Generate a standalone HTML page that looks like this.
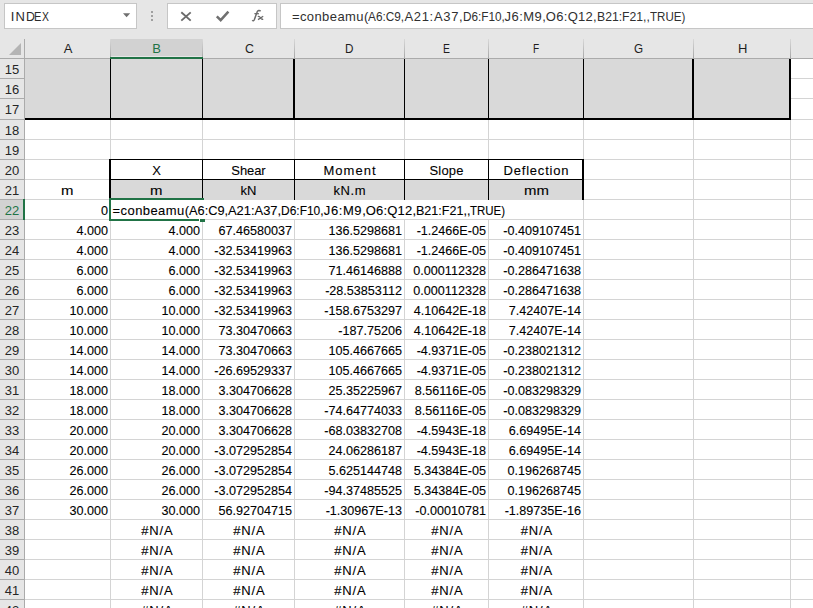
<!DOCTYPE html>
<html><head><meta charset="utf-8"><style>
html,body{margin:0;padding:0;}
body{width:813px;height:608px;overflow:hidden;position:relative;background:#fff;font-family:"Liberation Sans",sans-serif;}
body>div{position:absolute;}
.t{white-space:pre;}
.b{-webkit-text-stroke:0.1px currentColor;}
</style></head><body>
<div style="left:0px;top:0px;width:813px;height:39px;background:#e6e6e6;"></div>
<div style="left:4px;top:3px;width:133px;height:26px;background:#fff;box-sizing:border-box;border:1px solid #c6c6c6;"></div>
<div class="t" style="left:10.70px;top:10.00px;font-size:13px;line-height:13px;color:#2a2a2a;">I</div>
<div class="t" style="left:15.50px;top:10.00px;font-size:13px;line-height:13px;color:#2a2a2a;">N</div>
<div class="t" style="left:25.80px;top:10.00px;font-size:13px;line-height:13px;color:#2a2a2a;transform:scaleX(0.95);transform-origin:0 0;">D</div>
<div class="t" style="left:34.40px;top:10.00px;font-size:13px;line-height:13px;color:#2a2a2a;transform:scaleX(0.85);transform-origin:0 0;">E</div>
<div class="t" style="left:41.80px;top:10.00px;font-size:13px;line-height:13px;color:#2a2a2a;transform:scaleX(0.8);transform-origin:0 0;">X</div>
<svg style="position:absolute;left:122px;top:12px" width="10" height="7"><polygon points="1,1.2 8.2,1.2 4.6,5.2" fill="#6f6f6f"/></svg>
<div style="left:151px;top:11px;width:2px;height:2px;background:#a0a0a0;"></div>
<div style="left:151px;top:15px;width:2px;height:2px;background:#a0a0a0;"></div>
<div style="left:151px;top:19px;width:2px;height:2px;background:#a0a0a0;"></div>
<div style="left:167px;top:3px;width:110px;height:26px;background:#fff;box-sizing:border-box;border:1px solid #c6c6c6;"></div>
<svg style="position:absolute;left:0;top:0" width="300" height="39"><path d="M181.3 12.2 L190.7 20.6 M190.7 12.4 L181.3 20.6" stroke="#6b6b6b" stroke-width="1.9" fill="none"/><path d="M216.8 16.3 L220.7 20.2 L228.4 11.6" stroke="#707070" stroke-width="2.5" fill="none"/><path d="M260.6 11.2 C259.6 9.9 257.6 10.2 257 12.2 L254.4 19.6 C254 20.9 253 21.1 252.2 20.2" stroke="#6b6b6b" stroke-width="1.5" fill="none"/><path d="M254.4 13.7 L258.9 13.7" stroke="#6b6b6b" stroke-width="1.3" fill="none"/><path d="M257.8 16.6 C259 16 259.8 16.6 260.6 18 C261.3 19.3 262 19.6 263.2 19.1 M263.2 16.3 L258 19.6" stroke="#6b6b6b" stroke-width="1.3" fill="none"/></svg>
<div style="left:280px;top:3px;width:535px;height:26px;background:#fff;box-sizing:border-box;border:1px solid #c6c6c6;"></div>
<div class="t" style="left:291.90px;top:10.00px;font-size:13px;line-height:13px;color:#303030;letter-spacing:0.419px;">=conbeamu(</div>
<div class="t" style="left:368.30px;top:10.00px;font-size:13px;line-height:13px;color:#303030;transform:scaleX(0.9083399874427034);transform-origin:0 0;">A6:C9,</div>
<div class="t" style="left:404.40px;top:10.00px;font-size:13px;line-height:13px;color:#303030;letter-spacing:0.688px;">A21:A37,</div>
<div class="t" style="left:462.70px;top:10.00px;font-size:13px;line-height:13px;color:#303030;transform:scaleX(0.903923953072453);transform-origin:0 0;">D6:F10,</div>
<div class="t" style="left:504.50px;top:10.00px;font-size:13px;line-height:13px;color:#303030;letter-spacing:0.457px;">J6:M9,</div>
<div class="t" style="left:545.80px;top:10.00px;font-size:13px;line-height:13px;color:#303030;letter-spacing:0.294px;">O6:Q12,</div>
<div class="t" style="left:596.70px;top:10.00px;font-size:13px;line-height:13px;color:#303030;transform:scaleX(0.9384858765581734);transform-origin:0 0;">B21:F21,,</div>
<div class="t" style="left:649.60px;top:10.00px;font-size:13px;line-height:13px;color:#303030;transform:scaleX(0.8887738406540849);transform-origin:0 0;">TRUE)</div>
<div style="left:0px;top:39px;width:813px;height:19px;background:#e6e6e6;"></div>
<div style="left:111px;top:39px;width:91px;height:17px;background:#d2d2d2;"></div>
<div style="left:110px;top:39px;width:1px;height:19px;background:linear-gradient(#d8d8d8,#a8a8a8);"></div>
<div style="left:202px;top:39px;width:1px;height:19px;background:linear-gradient(#d8d8d8,#a8a8a8);"></div>
<div style="left:294px;top:39px;width:1px;height:19px;background:linear-gradient(#d8d8d8,#a8a8a8);"></div>
<div style="left:404px;top:39px;width:1px;height:19px;background:linear-gradient(#d8d8d8,#a8a8a8);"></div>
<div style="left:488px;top:39px;width:1px;height:19px;background:linear-gradient(#d8d8d8,#a8a8a8);"></div>
<div style="left:583px;top:39px;width:1px;height:19px;background:linear-gradient(#d8d8d8,#a8a8a8);"></div>
<div style="left:693px;top:39px;width:1px;height:19px;background:linear-gradient(#d8d8d8,#a8a8a8);"></div>
<div style="left:790px;top:39px;width:1px;height:19px;background:linear-gradient(#d8d8d8,#a8a8a8);"></div>
<div style="left:24px;top:39px;width:1px;height:19px;background:#ababab;"></div>
<div style="left:0px;top:58px;width:813px;height:1px;background:#ababab;"></div>
<div style="left:110px;top:57px;width:93px;height:2px;background:#217346;"></div>
<svg style="position:absolute;left:9px;top:43px" width="13" height="12"><polygon points="12,0 12,12 0,12" fill="#b4b4b4"/></svg>
<div class="t" style="left:63.86px;top:42.00px;font-size:13px;line-height:13px;color:#1e1e1e;">A</div>
<div class="t" style="left:152.16px;top:42.00px;font-size:13px;line-height:13px;color:#217346;">B</div>
<div class="t" style="left:244.74px;top:42.00px;font-size:13px;line-height:13px;color:#1e1e1e;transform:scaleX(0.95);transform-origin:0 0;">C</div>
<div class="t" style="left:345.48px;top:42.00px;font-size:13px;line-height:13px;color:#1e1e1e;transform:scaleX(0.9);transform-origin:0 0;">D</div>
<div class="t" style="left:443.33px;top:42.00px;font-size:13px;line-height:13px;color:#1e1e1e;transform:scaleX(0.8);transform-origin:0 0;">E</div>
<div class="t" style="left:533.30px;top:42.00px;font-size:13px;line-height:13px;color:#1e1e1e;transform:scaleX(0.78);transform-origin:0 0;">F</div>
<div class="t" style="left:634.15px;top:42.00px;font-size:13px;line-height:13px;color:#1e1e1e;transform:scaleX(0.9);transform-origin:0 0;">G</div>
<div class="t" style="left:738.01px;top:42.00px;font-size:13px;line-height:13px;color:#1e1e1e;">H</div>
<div style="left:25px;top:59px;width:788px;height:549px;background:#fff;"></div>
<div style="left:0px;top:59px;width:24px;height:549px;background:#e6e6e6;"></div>
<div style="left:24px;top:59px;width:1px;height:549px;background:#ababab;"></div>
<div style="left:0px;top:200px;width:23px;height:19px;background:#d2d2d2;"></div>
<div style="left:0px;top:78px;width:24px;height:1px;background:#ababab;"></div>
<div style="left:25px;top:78px;width:788px;height:1px;background:#d4d4d4;"></div>
<div style="left:0px;top:98px;width:24px;height:1px;background:#ababab;"></div>
<div style="left:25px;top:98px;width:788px;height:1px;background:#d4d4d4;"></div>
<div style="left:0px;top:119px;width:24px;height:1px;background:#ababab;"></div>
<div style="left:25px;top:119px;width:788px;height:1px;background:#d4d4d4;"></div>
<div style="left:0px;top:139px;width:24px;height:1px;background:#ababab;"></div>
<div style="left:25px;top:139px;width:788px;height:1px;background:#d4d4d4;"></div>
<div style="left:0px;top:159px;width:24px;height:1px;background:#ababab;"></div>
<div style="left:25px;top:159px;width:788px;height:1px;background:#d4d4d4;"></div>
<div style="left:0px;top:179px;width:24px;height:1px;background:#ababab;"></div>
<div style="left:25px;top:179px;width:788px;height:1px;background:#d4d4d4;"></div>
<div style="left:0px;top:199px;width:24px;height:1px;background:#ababab;"></div>
<div style="left:25px;top:199px;width:788px;height:1px;background:#d4d4d4;"></div>
<div style="left:0px;top:219px;width:24px;height:1px;background:#ababab;"></div>
<div style="left:25px;top:219px;width:788px;height:1px;background:#d4d4d4;"></div>
<div style="left:0px;top:239px;width:24px;height:1px;background:#ababab;"></div>
<div style="left:25px;top:239px;width:788px;height:1px;background:#d4d4d4;"></div>
<div style="left:0px;top:259px;width:24px;height:1px;background:#ababab;"></div>
<div style="left:25px;top:259px;width:788px;height:1px;background:#d4d4d4;"></div>
<div style="left:0px;top:279px;width:24px;height:1px;background:#ababab;"></div>
<div style="left:25px;top:279px;width:788px;height:1px;background:#d4d4d4;"></div>
<div style="left:0px;top:299px;width:24px;height:1px;background:#ababab;"></div>
<div style="left:25px;top:299px;width:788px;height:1px;background:#d4d4d4;"></div>
<div style="left:0px;top:319px;width:24px;height:1px;background:#ababab;"></div>
<div style="left:25px;top:319px;width:788px;height:1px;background:#d4d4d4;"></div>
<div style="left:0px;top:339px;width:24px;height:1px;background:#ababab;"></div>
<div style="left:25px;top:339px;width:788px;height:1px;background:#d4d4d4;"></div>
<div style="left:0px;top:359px;width:24px;height:1px;background:#ababab;"></div>
<div style="left:25px;top:359px;width:788px;height:1px;background:#d4d4d4;"></div>
<div style="left:0px;top:379px;width:24px;height:1px;background:#ababab;"></div>
<div style="left:25px;top:379px;width:788px;height:1px;background:#d4d4d4;"></div>
<div style="left:0px;top:399px;width:24px;height:1px;background:#ababab;"></div>
<div style="left:25px;top:399px;width:788px;height:1px;background:#d4d4d4;"></div>
<div style="left:0px;top:419px;width:24px;height:1px;background:#ababab;"></div>
<div style="left:25px;top:419px;width:788px;height:1px;background:#d4d4d4;"></div>
<div style="left:0px;top:439px;width:24px;height:1px;background:#ababab;"></div>
<div style="left:25px;top:439px;width:788px;height:1px;background:#d4d4d4;"></div>
<div style="left:0px;top:459px;width:24px;height:1px;background:#ababab;"></div>
<div style="left:25px;top:459px;width:788px;height:1px;background:#d4d4d4;"></div>
<div style="left:0px;top:479px;width:24px;height:1px;background:#ababab;"></div>
<div style="left:25px;top:479px;width:788px;height:1px;background:#d4d4d4;"></div>
<div style="left:0px;top:499px;width:24px;height:1px;background:#ababab;"></div>
<div style="left:25px;top:499px;width:788px;height:1px;background:#d4d4d4;"></div>
<div style="left:0px;top:519px;width:24px;height:1px;background:#ababab;"></div>
<div style="left:25px;top:519px;width:788px;height:1px;background:#d4d4d4;"></div>
<div style="left:0px;top:539px;width:24px;height:1px;background:#ababab;"></div>
<div style="left:25px;top:539px;width:788px;height:1px;background:#d4d4d4;"></div>
<div style="left:0px;top:559px;width:24px;height:1px;background:#ababab;"></div>
<div style="left:25px;top:559px;width:788px;height:1px;background:#d4d4d4;"></div>
<div style="left:0px;top:579px;width:24px;height:1px;background:#ababab;"></div>
<div style="left:25px;top:579px;width:788px;height:1px;background:#d4d4d4;"></div>
<div style="left:0px;top:599px;width:24px;height:1px;background:#ababab;"></div>
<div style="left:25px;top:599px;width:788px;height:1px;background:#d4d4d4;"></div>
<div style="left:0px;top:619px;width:24px;height:1px;background:#ababab;"></div>
<div style="left:25px;top:619px;width:788px;height:1px;background:#d4d4d4;"></div>
<div style="left:110px;top:59px;width:1px;height:549px;background:#d4d4d4;"></div>
<div style="left:202px;top:59px;width:1px;height:549px;background:#d4d4d4;"></div>
<div style="left:294px;top:59px;width:1px;height:549px;background:#d4d4d4;"></div>
<div style="left:404px;top:59px;width:1px;height:549px;background:#d4d4d4;"></div>
<div style="left:488px;top:59px;width:1px;height:549px;background:#d4d4d4;"></div>
<div style="left:583px;top:59px;width:1px;height:549px;background:#d4d4d4;"></div>
<div style="left:693px;top:59px;width:1px;height:549px;background:#d4d4d4;"></div>
<div style="left:790px;top:59px;width:1px;height:549px;background:#d4d4d4;"></div>
<div style="left:23px;top:199px;width:2px;height:21px;background:#217346;"></div>
<div style="left:25px;top:59px;width:766px;height:61px;background:#d9d9d9;"></div>
<div style="left:110px;top:59px;width:1px;height:60px;background:#000;"></div>
<div style="left:202px;top:59px;width:1px;height:60px;background:#000;"></div>
<div style="left:404px;top:59px;width:1px;height:60px;background:#000;"></div>
<div style="left:488px;top:59px;width:1px;height:60px;background:#000;"></div>
<div style="left:583px;top:59px;width:1px;height:60px;background:#000;"></div>
<div style="left:293px;top:59px;width:2px;height:60px;background:#000;"></div>
<div style="left:692px;top:59px;width:2px;height:60px;background:#000;"></div>
<div style="left:789px;top:59px;width:2px;height:60px;background:#000;"></div>
<div style="left:25px;top:118px;width:766px;height:2px;background:#000;"></div>
<div style="left:111px;top:180px;width:472px;height:20px;background:#d9d9d9;"></div>
<div style="left:109px;top:159px;width:475px;height:1px;background:#000;"></div>
<div style="left:109px;top:179px;width:475px;height:1px;background:#000;"></div>
<div style="left:202px;top:159px;width:1px;height:41px;background:#000;"></div>
<div style="left:294px;top:159px;width:1px;height:41px;background:#000;"></div>
<div style="left:404px;top:159px;width:1px;height:41px;background:#000;"></div>
<div style="left:488px;top:159px;width:1px;height:41px;background:#000;"></div>
<div style="left:109px;top:159px;width:2px;height:41px;background:#000;"></div>
<div style="left:582px;top:159px;width:2px;height:41px;background:#000;"></div>
<div style="left:111px;top:200px;width:472px;height:19px;background:#fff;"></div>
<div style="left:109px;top:198px;width:95px;height:2px;background:#217346;"></div>
<div style="left:109px;top:198px;width:2px;height:23px;background:#217346;"></div>
<div style="left:109px;top:219px;width:90px;height:2px;background:#217346;"></div>
<div style="left:200px;top:219px;width:5px;height:3px;background:#217346;"></div>
<div style="left:199px;top:218px;width:1px;height:4px;background:#fff;"></div>
<div class="t" style="left:4.77px;top:63.00px;font-size:13px;line-height:13px;color:#262626;">15</div>
<div class="t" style="left:4.77px;top:83.00px;font-size:13px;line-height:13px;color:#262626;">16</div>
<div class="t" style="left:4.77px;top:103.00px;font-size:13px;line-height:13px;color:#262626;">17</div>
<div class="t" style="left:4.77px;top:124.00px;font-size:13px;line-height:13px;color:#262626;">18</div>
<div class="t" style="left:4.77px;top:144.00px;font-size:13px;line-height:13px;color:#262626;">19</div>
<div class="t" style="left:4.77px;top:164.00px;font-size:13px;line-height:13px;color:#262626;">20</div>
<div class="t" style="left:4.77px;top:184.00px;font-size:13px;line-height:13px;color:#262626;">21</div>
<div class="t" style="left:4.77px;top:204.00px;font-size:13px;line-height:13px;color:#217346;">22</div>
<div class="t" style="left:4.77px;top:224.00px;font-size:13px;line-height:13px;color:#262626;">23</div>
<div class="t" style="left:4.77px;top:244.00px;font-size:13px;line-height:13px;color:#262626;">24</div>
<div class="t" style="left:4.77px;top:264.00px;font-size:13px;line-height:13px;color:#262626;">25</div>
<div class="t" style="left:4.77px;top:284.00px;font-size:13px;line-height:13px;color:#262626;">26</div>
<div class="t" style="left:4.77px;top:304.00px;font-size:13px;line-height:13px;color:#262626;">27</div>
<div class="t" style="left:4.77px;top:324.00px;font-size:13px;line-height:13px;color:#262626;">28</div>
<div class="t" style="left:4.77px;top:344.00px;font-size:13px;line-height:13px;color:#262626;">29</div>
<div class="t" style="left:4.77px;top:364.00px;font-size:13px;line-height:13px;color:#262626;">30</div>
<div class="t" style="left:4.77px;top:384.00px;font-size:13px;line-height:13px;color:#262626;">31</div>
<div class="t" style="left:4.77px;top:404.00px;font-size:13px;line-height:13px;color:#262626;">32</div>
<div class="t" style="left:4.77px;top:424.00px;font-size:13px;line-height:13px;color:#262626;">33</div>
<div class="t" style="left:4.77px;top:444.00px;font-size:13px;line-height:13px;color:#262626;">34</div>
<div class="t" style="left:4.77px;top:464.00px;font-size:13px;line-height:13px;color:#262626;">35</div>
<div class="t" style="left:4.77px;top:484.00px;font-size:13px;line-height:13px;color:#262626;">36</div>
<div class="t" style="left:4.77px;top:504.00px;font-size:13px;line-height:13px;color:#262626;">37</div>
<div class="t" style="left:4.77px;top:524.00px;font-size:13px;line-height:13px;color:#262626;">38</div>
<div class="t" style="left:4.77px;top:544.00px;font-size:13px;line-height:13px;color:#262626;">39</div>
<div class="t" style="left:4.77px;top:564.00px;font-size:13px;line-height:13px;color:#262626;">40</div>
<div class="t" style="left:4.77px;top:584.00px;font-size:13px;line-height:13px;color:#262626;">41</div>
<div class="t" style="left:4.77px;top:604.00px;font-size:13px;line-height:13px;color:#262626;">42</div>
<div class="t b" style="left:152.16px;top:164.00px;font-size:13.0px;line-height:13.0px;color:#000;">X</div>
<div class="t b" style="left:231.30px;top:164.00px;font-size:13.0px;line-height:13.0px;color:#000;letter-spacing:-0.073px;">Shear</div>
<div class="t b" style="left:323.50px;top:164.00px;font-size:13.0px;line-height:13.0px;color:#000;letter-spacing:1.008px;">Moment</div>
<div class="t b" style="left:429.50px;top:164.00px;font-size:13.0px;line-height:13.0px;color:#000;letter-spacing:0.188px;">Slope</div>
<div class="t b" style="left:503.50px;top:164.00px;font-size:13.0px;line-height:13.0px;color:#000;letter-spacing:0.799px;">Deflection</div>
<div class="t b" style="left:61.27px;top:184.00px;font-size:13.0px;line-height:13.0px;color:#000;transform:scaleX(1.15);transform-origin:0 0;">m</div>
<div class="t b" style="left:150.27px;top:184.00px;font-size:13.0px;line-height:13.0px;color:#000;transform:scaleX(1.15);transform-origin:0 0;">m</div>
<div class="t b" style="left:240.50px;top:184.00px;font-size:13.0px;line-height:13.0px;color:#000;letter-spacing:0.112px;">kN</div>
<div class="t b" style="left:333.50px;top:184.00px;font-size:13.0px;line-height:13.0px;color:#000;letter-spacing:0.557px;">kN.m</div>
<div class="t b" style="left:523.55px;top:184.00px;font-size:13.0px;line-height:13.0px;color:#000;transform:scaleX(1.15);transform-origin:0 0;">mm</div>
<div class="t b" style="left:100.99px;top:205.33px;font-size:12.6px;line-height:12.6px;color:#000;">0</div>
<div class="t b" style="left:112.60px;top:204.00px;font-size:13px;line-height:13px;color:#000;letter-spacing:0.419px;">=conbeamu(</div>
<div class="t b" style="left:189.00px;top:204.00px;font-size:13px;line-height:13px;color:#000;transform:scaleX(0.9838253049587168);transform-origin:0 0;">A6:C9,</div>
<div class="t b" style="left:228.10px;top:204.00px;font-size:13px;line-height:13px;color:#000;transform:scaleX(0.9927895387840552);transform-origin:0 0;">A21:A37,</div>
<div class="t b" style="left:281.20px;top:204.00px;font-size:13px;line-height:13px;color:#000;transform:scaleX(0.9212239330355612);transform-origin:0 0;">D6:F10,</div>
<div class="t b" style="left:323.80px;top:204.00px;font-size:13px;line-height:13px;color:#000;letter-spacing:0.597px;">J6:M9,</div>
<div class="t b" style="left:365.80px;top:204.00px;font-size:13px;line-height:13px;color:#000;letter-spacing:0.177px;">O6:Q12,</div>
<div class="t b" style="left:416.00px;top:204.00px;font-size:13px;line-height:13px;color:#000;transform:scaleX(0.9650970072734315);transform-origin:0 0;">B21:F21,,</div>
<div class="t b" style="left:470.40px;top:204.00px;font-size:13px;line-height:13px;color:#000;transform:scaleX(0.8812205218949862);transform-origin:0 0;">TRUE)</div>
<div class="t b" style="left:76.47px;top:225.33px;font-size:12.6px;line-height:12.6px;color:#000;">4.000</div>
<div class="t b" style="left:168.47px;top:225.33px;font-size:12.6px;line-height:12.6px;color:#000;">4.000</div>
<div class="t b" style="left:218.42px;top:225.33px;font-size:12.6px;line-height:12.6px;color:#000;">67.46580037</div>
<div class="t b" style="left:328.42px;top:225.33px;font-size:12.6px;line-height:12.6px;color:#000;">136.5298681</div>
<div class="t b" style="left:416.65px;top:225.33px;font-size:12.6px;line-height:12.6px;color:#000;">-1.2466E-05</div>
<div class="t b" style="left:503.23px;top:225.33px;font-size:12.6px;line-height:12.6px;color:#000;">-0.409107451</div>
<div class="t b" style="left:76.47px;top:245.33px;font-size:12.6px;line-height:12.6px;color:#000;">4.000</div>
<div class="t b" style="left:168.47px;top:245.33px;font-size:12.6px;line-height:12.6px;color:#000;">4.000</div>
<div class="t b" style="left:214.23px;top:245.33px;font-size:12.6px;line-height:12.6px;color:#000;">-32.53419963</div>
<div class="t b" style="left:328.42px;top:245.33px;font-size:12.6px;line-height:12.6px;color:#000;">136.5298681</div>
<div class="t b" style="left:416.65px;top:245.33px;font-size:12.6px;line-height:12.6px;color:#000;">-1.2466E-05</div>
<div class="t b" style="left:503.23px;top:245.33px;font-size:12.6px;line-height:12.6px;color:#000;">-0.409107451</div>
<div class="t b" style="left:76.47px;top:265.33px;font-size:12.6px;line-height:12.6px;color:#000;">6.000</div>
<div class="t b" style="left:168.47px;top:265.33px;font-size:12.6px;line-height:12.6px;color:#000;">6.000</div>
<div class="t b" style="left:214.23px;top:265.33px;font-size:12.6px;line-height:12.6px;color:#000;">-32.53419963</div>
<div class="t b" style="left:328.42px;top:265.33px;font-size:12.6px;line-height:12.6px;color:#000;">71.46146888</div>
<div class="t b" style="left:413.36px;top:265.33px;font-size:12.6px;line-height:12.6px;color:#000;">0.000112328</div>
<div class="t b" style="left:503.23px;top:265.33px;font-size:12.6px;line-height:12.6px;color:#000;">-0.286471638</div>
<div class="t b" style="left:76.47px;top:285.33px;font-size:12.6px;line-height:12.6px;color:#000;">6.000</div>
<div class="t b" style="left:168.47px;top:285.33px;font-size:12.6px;line-height:12.6px;color:#000;">6.000</div>
<div class="t b" style="left:214.23px;top:285.33px;font-size:12.6px;line-height:12.6px;color:#000;">-32.53419963</div>
<div class="t b" style="left:325.16px;top:285.33px;font-size:12.6px;line-height:12.6px;color:#000;">-28.53853112</div>
<div class="t b" style="left:413.36px;top:285.33px;font-size:12.6px;line-height:12.6px;color:#000;">0.000112328</div>
<div class="t b" style="left:503.23px;top:285.33px;font-size:12.6px;line-height:12.6px;color:#000;">-0.286471638</div>
<div class="t b" style="left:69.46px;top:305.33px;font-size:12.6px;line-height:12.6px;color:#000;">10.000</div>
<div class="t b" style="left:161.46px;top:305.33px;font-size:12.6px;line-height:12.6px;color:#000;">10.000</div>
<div class="t b" style="left:214.23px;top:305.33px;font-size:12.6px;line-height:12.6px;color:#000;">-32.53419963</div>
<div class="t b" style="left:324.23px;top:305.33px;font-size:12.6px;line-height:12.6px;color:#000;">-158.6753297</div>
<div class="t b" style="left:413.84px;top:305.33px;font-size:12.6px;line-height:12.6px;color:#000;">4.10642E-18</div>
<div class="t b" style="left:508.84px;top:305.33px;font-size:12.6px;line-height:12.6px;color:#000;">7.42407E-14</div>
<div class="t b" style="left:69.46px;top:325.33px;font-size:12.6px;line-height:12.6px;color:#000;">10.000</div>
<div class="t b" style="left:161.46px;top:325.33px;font-size:12.6px;line-height:12.6px;color:#000;">10.000</div>
<div class="t b" style="left:218.42px;top:325.33px;font-size:12.6px;line-height:12.6px;color:#000;">73.30470663</div>
<div class="t b" style="left:338.24px;top:325.33px;font-size:12.6px;line-height:12.6px;color:#000;">-187.75206</div>
<div class="t b" style="left:413.84px;top:325.33px;font-size:12.6px;line-height:12.6px;color:#000;">4.10642E-18</div>
<div class="t b" style="left:508.84px;top:325.33px;font-size:12.6px;line-height:12.6px;color:#000;">7.42407E-14</div>
<div class="t b" style="left:69.46px;top:345.33px;font-size:12.6px;line-height:12.6px;color:#000;">14.000</div>
<div class="t b" style="left:161.46px;top:345.33px;font-size:12.6px;line-height:12.6px;color:#000;">14.000</div>
<div class="t b" style="left:218.42px;top:345.33px;font-size:12.6px;line-height:12.6px;color:#000;">73.30470663</div>
<div class="t b" style="left:328.42px;top:345.33px;font-size:12.6px;line-height:12.6px;color:#000;">105.4667665</div>
<div class="t b" style="left:416.65px;top:345.33px;font-size:12.6px;line-height:12.6px;color:#000;">-4.9371E-05</div>
<div class="t b" style="left:503.23px;top:345.33px;font-size:12.6px;line-height:12.6px;color:#000;">-0.238021312</div>
<div class="t b" style="left:69.46px;top:365.33px;font-size:12.6px;line-height:12.6px;color:#000;">14.000</div>
<div class="t b" style="left:161.46px;top:365.33px;font-size:12.6px;line-height:12.6px;color:#000;">14.000</div>
<div class="t b" style="left:214.23px;top:365.33px;font-size:12.6px;line-height:12.6px;color:#000;">-26.69529337</div>
<div class="t b" style="left:328.42px;top:365.33px;font-size:12.6px;line-height:12.6px;color:#000;">105.4667665</div>
<div class="t b" style="left:416.65px;top:365.33px;font-size:12.6px;line-height:12.6px;color:#000;">-4.9371E-05</div>
<div class="t b" style="left:503.23px;top:365.33px;font-size:12.6px;line-height:12.6px;color:#000;">-0.238021312</div>
<div class="t b" style="left:69.46px;top:385.33px;font-size:12.6px;line-height:12.6px;color:#000;">18.000</div>
<div class="t b" style="left:161.46px;top:385.33px;font-size:12.6px;line-height:12.6px;color:#000;">18.000</div>
<div class="t b" style="left:218.42px;top:385.33px;font-size:12.6px;line-height:12.6px;color:#000;">3.304706628</div>
<div class="t b" style="left:328.42px;top:385.33px;font-size:12.6px;line-height:12.6px;color:#000;">25.35225967</div>
<div class="t b" style="left:414.77px;top:385.33px;font-size:12.6px;line-height:12.6px;color:#000;">8.56116E-05</div>
<div class="t b" style="left:503.23px;top:385.33px;font-size:12.6px;line-height:12.6px;color:#000;">-0.083298329</div>
<div class="t b" style="left:69.46px;top:405.33px;font-size:12.6px;line-height:12.6px;color:#000;">18.000</div>
<div class="t b" style="left:161.46px;top:405.33px;font-size:12.6px;line-height:12.6px;color:#000;">18.000</div>
<div class="t b" style="left:218.42px;top:405.33px;font-size:12.6px;line-height:12.6px;color:#000;">3.304706628</div>
<div class="t b" style="left:324.23px;top:405.33px;font-size:12.6px;line-height:12.6px;color:#000;">-74.64774033</div>
<div class="t b" style="left:414.77px;top:405.33px;font-size:12.6px;line-height:12.6px;color:#000;">8.56116E-05</div>
<div class="t b" style="left:503.23px;top:405.33px;font-size:12.6px;line-height:12.6px;color:#000;">-0.083298329</div>
<div class="t b" style="left:69.46px;top:425.33px;font-size:12.6px;line-height:12.6px;color:#000;">20.000</div>
<div class="t b" style="left:161.46px;top:425.33px;font-size:12.6px;line-height:12.6px;color:#000;">20.000</div>
<div class="t b" style="left:218.42px;top:425.33px;font-size:12.6px;line-height:12.6px;color:#000;">3.304706628</div>
<div class="t b" style="left:324.23px;top:425.33px;font-size:12.6px;line-height:12.6px;color:#000;">-68.03832708</div>
<div class="t b" style="left:416.65px;top:425.33px;font-size:12.6px;line-height:12.6px;color:#000;">-4.5943E-18</div>
<div class="t b" style="left:508.84px;top:425.33px;font-size:12.6px;line-height:12.6px;color:#000;">6.69495E-14</div>
<div class="t b" style="left:69.46px;top:445.33px;font-size:12.6px;line-height:12.6px;color:#000;">20.000</div>
<div class="t b" style="left:161.46px;top:445.33px;font-size:12.6px;line-height:12.6px;color:#000;">20.000</div>
<div class="t b" style="left:214.23px;top:445.33px;font-size:12.6px;line-height:12.6px;color:#000;">-3.072952854</div>
<div class="t b" style="left:328.42px;top:445.33px;font-size:12.6px;line-height:12.6px;color:#000;">24.06286187</div>
<div class="t b" style="left:416.65px;top:445.33px;font-size:12.6px;line-height:12.6px;color:#000;">-4.5943E-18</div>
<div class="t b" style="left:508.84px;top:445.33px;font-size:12.6px;line-height:12.6px;color:#000;">6.69495E-14</div>
<div class="t b" style="left:69.46px;top:465.33px;font-size:12.6px;line-height:12.6px;color:#000;">26.000</div>
<div class="t b" style="left:161.46px;top:465.33px;font-size:12.6px;line-height:12.6px;color:#000;">26.000</div>
<div class="t b" style="left:214.23px;top:465.33px;font-size:12.6px;line-height:12.6px;color:#000;">-3.072952854</div>
<div class="t b" style="left:328.42px;top:465.33px;font-size:12.6px;line-height:12.6px;color:#000;">5.625144748</div>
<div class="t b" style="left:413.84px;top:465.33px;font-size:12.6px;line-height:12.6px;color:#000;">5.34384E-05</div>
<div class="t b" style="left:507.42px;top:465.33px;font-size:12.6px;line-height:12.6px;color:#000;">0.196268745</div>
<div class="t b" style="left:69.46px;top:485.33px;font-size:12.6px;line-height:12.6px;color:#000;">26.000</div>
<div class="t b" style="left:161.46px;top:485.33px;font-size:12.6px;line-height:12.6px;color:#000;">26.000</div>
<div class="t b" style="left:214.23px;top:485.33px;font-size:12.6px;line-height:12.6px;color:#000;">-3.072952854</div>
<div class="t b" style="left:324.23px;top:485.33px;font-size:12.6px;line-height:12.6px;color:#000;">-94.37485525</div>
<div class="t b" style="left:413.84px;top:485.33px;font-size:12.6px;line-height:12.6px;color:#000;">5.34384E-05</div>
<div class="t b" style="left:507.42px;top:485.33px;font-size:12.6px;line-height:12.6px;color:#000;">0.196268745</div>
<div class="t b" style="left:69.46px;top:505.33px;font-size:12.6px;line-height:12.6px;color:#000;">30.000</div>
<div class="t b" style="left:161.46px;top:505.33px;font-size:12.6px;line-height:12.6px;color:#000;">30.000</div>
<div class="t b" style="left:218.42px;top:505.33px;font-size:12.6px;line-height:12.6px;color:#000;">56.92704715</div>
<div class="t b" style="left:325.64px;top:505.33px;font-size:12.6px;line-height:12.6px;color:#000;">-1.30967E-13</div>
<div class="t b" style="left:415.24px;top:505.33px;font-size:12.6px;line-height:12.6px;color:#000;">-0.00010781</div>
<div class="t b" style="left:504.64px;top:505.33px;font-size:12.6px;line-height:12.6px;color:#000;">-1.89735E-16</div>
<div class="t b" style="left:141.25px;top:524.00px;font-size:13px;line-height:13px;color:#000;letter-spacing:0.866px;">#N/A</div>
<div class="t b" style="left:233.25px;top:524.00px;font-size:13px;line-height:13px;color:#000;letter-spacing:0.866px;">#N/A</div>
<div class="t b" style="left:334.25px;top:524.00px;font-size:13px;line-height:13px;color:#000;letter-spacing:0.866px;">#N/A</div>
<div class="t b" style="left:431.25px;top:524.00px;font-size:13px;line-height:13px;color:#000;letter-spacing:0.866px;">#N/A</div>
<div class="t b" style="left:520.75px;top:524.00px;font-size:13px;line-height:13px;color:#000;letter-spacing:0.866px;">#N/A</div>
<div class="t b" style="left:141.25px;top:544.00px;font-size:13px;line-height:13px;color:#000;letter-spacing:0.866px;">#N/A</div>
<div class="t b" style="left:233.25px;top:544.00px;font-size:13px;line-height:13px;color:#000;letter-spacing:0.866px;">#N/A</div>
<div class="t b" style="left:334.25px;top:544.00px;font-size:13px;line-height:13px;color:#000;letter-spacing:0.866px;">#N/A</div>
<div class="t b" style="left:431.25px;top:544.00px;font-size:13px;line-height:13px;color:#000;letter-spacing:0.866px;">#N/A</div>
<div class="t b" style="left:520.75px;top:544.00px;font-size:13px;line-height:13px;color:#000;letter-spacing:0.866px;">#N/A</div>
<div class="t b" style="left:141.25px;top:564.00px;font-size:13px;line-height:13px;color:#000;letter-spacing:0.866px;">#N/A</div>
<div class="t b" style="left:233.25px;top:564.00px;font-size:13px;line-height:13px;color:#000;letter-spacing:0.866px;">#N/A</div>
<div class="t b" style="left:334.25px;top:564.00px;font-size:13px;line-height:13px;color:#000;letter-spacing:0.866px;">#N/A</div>
<div class="t b" style="left:431.25px;top:564.00px;font-size:13px;line-height:13px;color:#000;letter-spacing:0.866px;">#N/A</div>
<div class="t b" style="left:520.75px;top:564.00px;font-size:13px;line-height:13px;color:#000;letter-spacing:0.866px;">#N/A</div>
<div class="t b" style="left:141.25px;top:584.00px;font-size:13px;line-height:13px;color:#000;letter-spacing:0.866px;">#N/A</div>
<div class="t b" style="left:233.25px;top:584.00px;font-size:13px;line-height:13px;color:#000;letter-spacing:0.866px;">#N/A</div>
<div class="t b" style="left:334.25px;top:584.00px;font-size:13px;line-height:13px;color:#000;letter-spacing:0.866px;">#N/A</div>
<div class="t b" style="left:431.25px;top:584.00px;font-size:13px;line-height:13px;color:#000;letter-spacing:0.866px;">#N/A</div>
<div class="t b" style="left:520.75px;top:584.00px;font-size:13px;line-height:13px;color:#000;letter-spacing:0.866px;">#N/A</div>
<div class="t b" style="left:141.25px;top:604.00px;font-size:13px;line-height:13px;color:#000;letter-spacing:0.866px;">#N/A</div>
<div class="t b" style="left:233.25px;top:604.00px;font-size:13px;line-height:13px;color:#000;letter-spacing:0.866px;">#N/A</div>
<div class="t b" style="left:334.25px;top:604.00px;font-size:13px;line-height:13px;color:#000;letter-spacing:0.866px;">#N/A</div>
<div class="t b" style="left:431.25px;top:604.00px;font-size:13px;line-height:13px;color:#000;letter-spacing:0.866px;">#N/A</div>
<div class="t b" style="left:520.75px;top:604.00px;font-size:13px;line-height:13px;color:#000;letter-spacing:0.866px;">#N/A</div>
</body></html>
